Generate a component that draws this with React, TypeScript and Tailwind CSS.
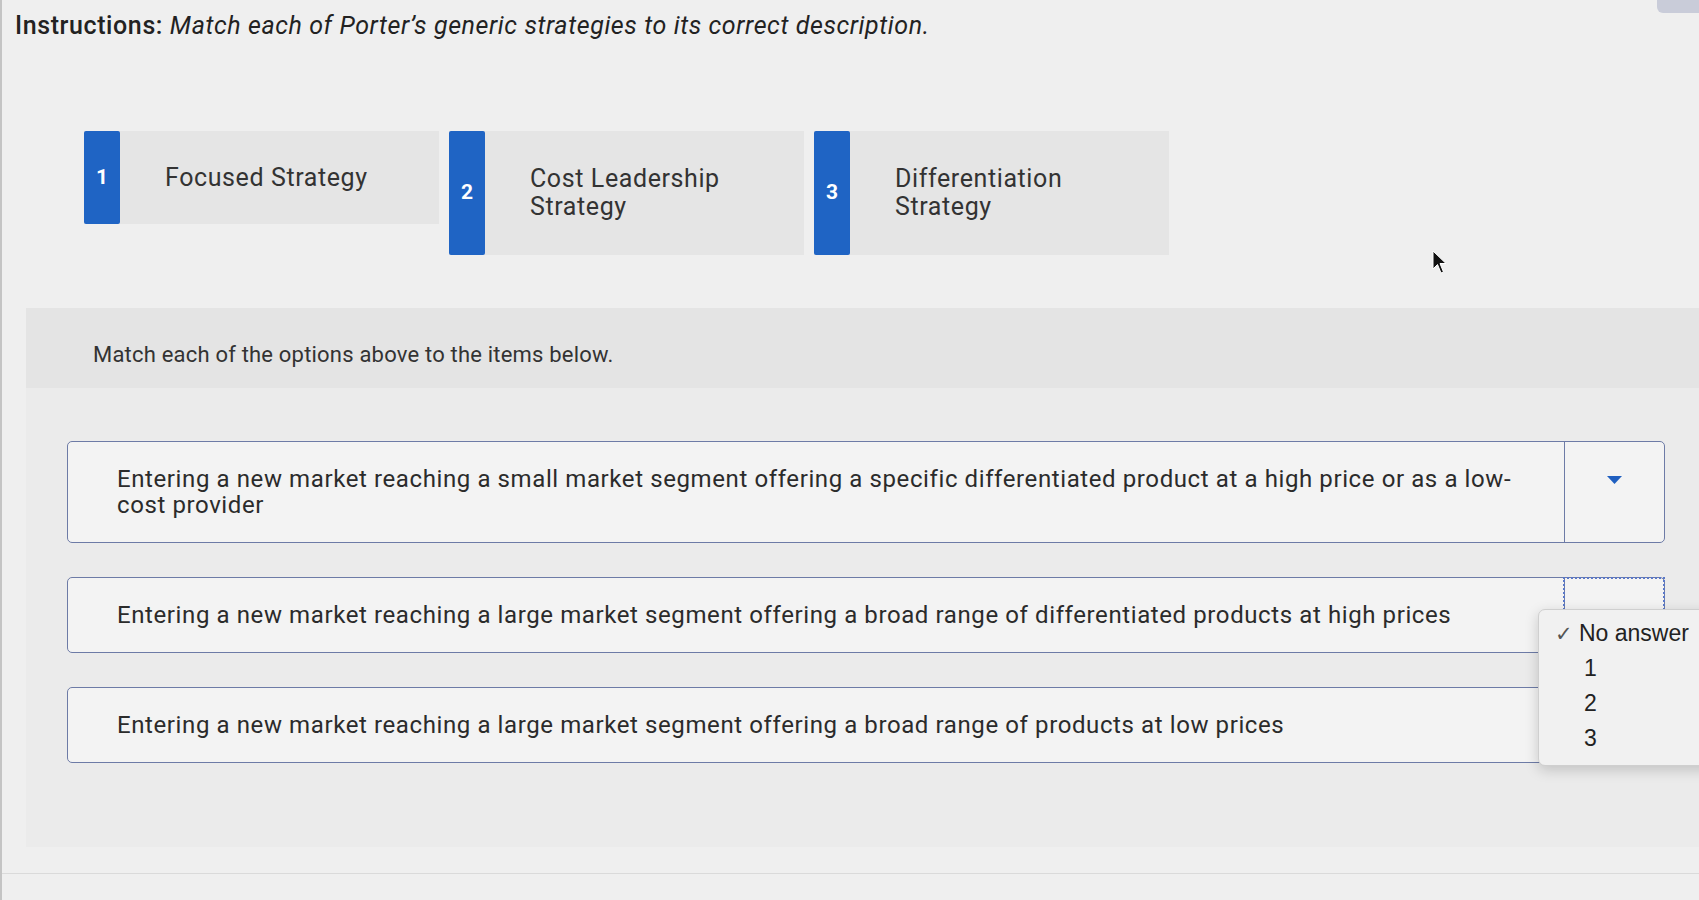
import React from "react";

const cards = [
  { n: "1", lines: ["Focused Strategy"], h: "h-[93px]" },
  { n: "2", lines: ["Cost Leadership", "Strategy"], h: "h-[124px]" },
  { n: "3", lines: ["Differentiation", "Strategy"], h: "h-[124px]" },
];

const items = [
  "Entering a new market reaching a small market segment offering a specific differentiated product at a high price or as a low-cost provider",
  "Entering a new market reaching a large market segment offering a broad range of differentiated products at high prices",
  "Entering a new market reaching a large market segment offering a broad range of products at low prices",
];

function Arrow() {
  return (
    <svg width="15" height="8" viewBox="0 0 15 8">
      <path d="M0 0 L15 0 L7.5 8 Z" fill="#1f5fc0" />
    </svg>
  );
}

export default function App() {
  return (
    <div
      className="relative w-[1699px] h-[900px] overflow-hidden bg-[#efefef] text-[#2e2e2e] border-l-2 border-[#c4c4c4]"
      style={{ fontFamily: "Roboto, Lato, sans-serif" }}
    >
      {/* top-right partial button */}
      <div className="absolute right-0 top-0 w-[42px] h-[13px] bg-[#c9ccd9] rounded-bl-[6px]" />

      {/* title */}
      <div className="pt-[10px] pl-[13px] text-[25px] leading-[32px] tracking-[0.6px] text-[#222]">
        <span className="font-medium">Instructions:</span>{" "}
        <span className="italic">Match each of Porter’s generic strategies to its correct description.</span>
      </div>

      {/* cards */}
      <div className="flex items-start gap-[10px] pl-[82px] mt-[89px]">
        {cards.map((c) => (
          <div key={c.n} className={`flex w-[355px] ${c.h} bg-[#e5e5e5]`}>
            <div className="w-[36px] h-full bg-[#1f64c4] rounded-[2px] flex items-center justify-center text-white font-bold text-[21px]">
              {c.n}
            </div>
            <div className="flex flex-col justify-center pl-[45px] text-[25px] leading-[28px] tracking-[0.6px] text-[#333]">
              {c.lines.map((l) => (
                <span key={l}>{l}</span>
              ))}
            </div>
          </div>
        ))}
      </div>

      {/* cursor */}
      <svg className="absolute left-[1430px] top-[250px]" width="16" height="26" viewBox="0 0 16 26">
        <path d="M1 1 L1 19 L5.5 14.5 L9 23 L11.5 22 L8 13.5 L14 13.5 Z" fill="#111" stroke="#fff" strokeWidth="1" />
      </svg>

      {/* panel */}
      <div className="ml-[24px] mt-[53px]">
        <div className="h-[80px] bg-[#e4e4e4] pl-[67px] pt-[34px] text-[22px] leading-[26px] tracking-[0.2px] text-[#333]">
          Match each of the options above to the items below.
        </div>
        <div className="bg-[#ebebeb] pl-[41px] pr-[34px] pt-[53px] pb-[84px] flex flex-col gap-[34px]">
          {items.map((t, i) => (
            <div key={i} className="flex bg-[#f3f3f3] border-[1.5px] border-[#6d7ba6] rounded-[5px]">
              <div className="flex-1 pl-[49px] pr-[44px] py-[24px] text-[24px] leading-[26px] tracking-[0.6px] text-[#2b2b2b]">
                {t}
              </div>
              <div
                className={`w-[100px] border-l-[1.5px] border-[#6d7ba6] flex justify-center pt-[34px] ${
                  i === 1 ? "outline-2 outline-dotted outline-[#5a78c8] -outline-offset-1" : ""
                }`}
              >
                <Arrow />
              </div>
            </div>
          ))}
        </div>
      </div>
      <div className="mt-[26px] h-px bg-[#dadada]" />

      {/* open select menu */}
      <div
        className="absolute left-[1536px] top-[609px] w-[200px] h-[157px] bg-[#f1f1f1] border border-[#cfcfcf] rounded-[7px] shadow-[0_4px_14px_rgba(0,0,0,0.18)] pt-[6px] text-[23px] leading-[35px] text-[#222]"
        style={{ fontFamily: "'Liberation Sans', Arial, sans-serif" }}
      >
        <div className="flex items-center">
          <span className="w-[40px] text-right pr-[6px] text-[#555] text-[21px]">✓</span>
          <span>No answer</span>
        </div>
        <div className="pl-[45px]">1</div>
        <div className="pl-[45px]">2</div>
        <div className="pl-[45px]">3</div>
      </div>
    </div>
  );
}
